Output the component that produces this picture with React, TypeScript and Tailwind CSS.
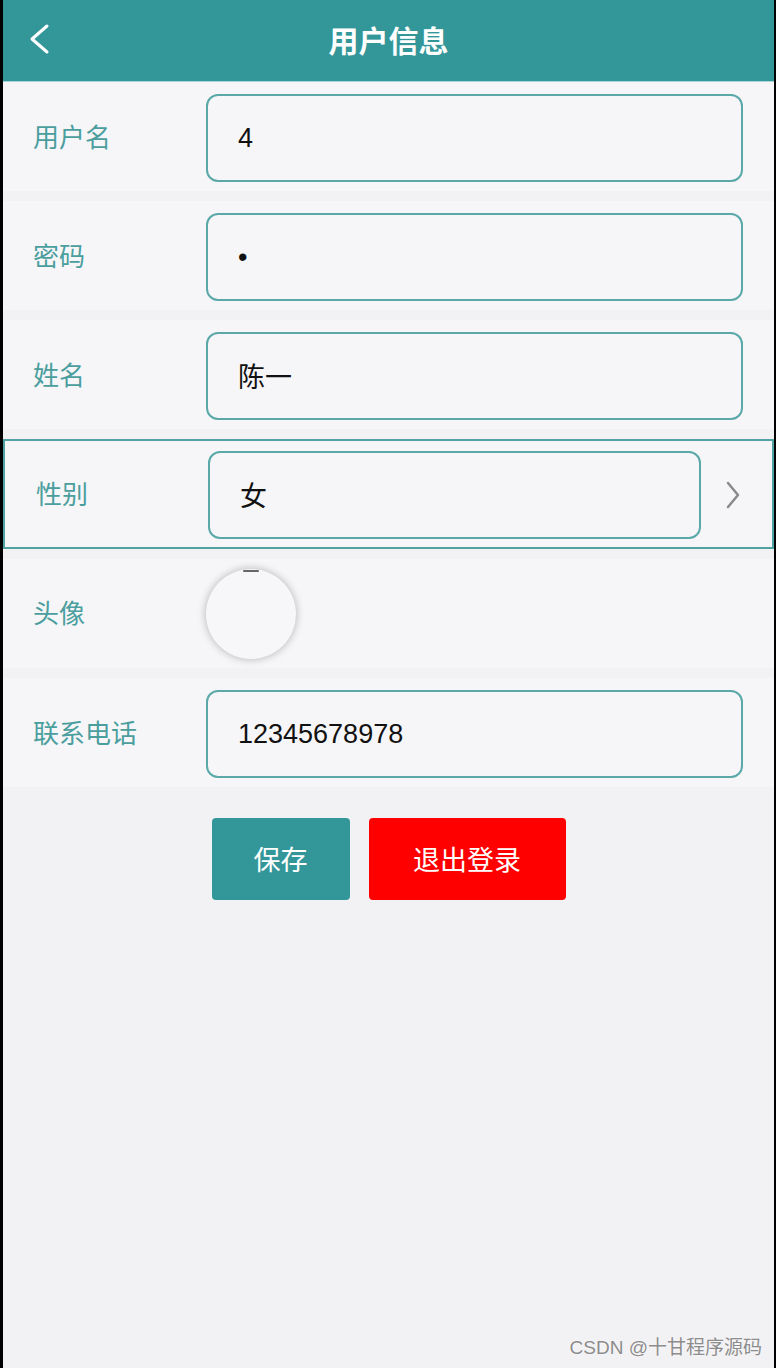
import React from "react";

const cjk = { fontFamily: '"Noto Sans CJK SC", "Noto Sans", sans-serif' };
const latin = { fontFamily: '"Liberation Sans", "Noto Sans CJK SC", sans-serif' };

function Row({ label, children }: { label: string; children: React.ReactNode }) {
  return (
    <div className="flex h-[109px] items-start bg-[#f6f6f8] pt-[12px] pl-[30px] pr-[31px]">
      <div className="flex h-[88px] w-[173px] items-center pb-[5px] text-[26px] text-[#4b9e9e]" style={cjk}>
        {label}
      </div>
      <div className="flex-1">{children}</div>
    </div>
  );
}

function Field({ value, font }: { value: string; font?: React.CSSProperties }) {
  return (
    <div
      className="flex h-[88px] items-center rounded-[12px] border-2 border-[#5aa8a8] bg-[#f6f6f8] pl-[30px] text-[27px] text-[#111]"
      style={font ?? cjk}
    >
      {value}
    </div>
  );
}

export default function App() {
  return (
    <div className="flex min-h-[1368px] bg-black">
      <div className="ml-[3px] mr-[2px] flex flex-1 flex-col bg-[#f2f1f4]">
        {/* Header */}
        <div className="relative flex h-[82px] items-center justify-center border-b border-[#a9d6d6] bg-[#33979a]">
          <svg
            className="absolute left-[25px] top-[23px]"
            width="22"
            height="32"
            viewBox="0 0 22 32"
            fill="none"
            stroke="white"
            strokeWidth="3"
            strokeLinecap="round"
            strokeLinejoin="round"
          >
            <path d="M19 3 L4 16 L19 29" />
          </svg>
          <div className="pb-[3px] text-[30px] font-bold text-white" style={cjk}>
            用户信息
          </div>
        </div>

        <div className="flex flex-col gap-[10px]">
          <Row label="用户名">
            <Field value="4" font={latin} />
          </Row>
          <Row label="密码">
            <Field value="•" font={latin} />
          </Row>
          <Row label="姓名">
            <Field value="陈一" />
          </Row>

          {/* Gender row with active border */}
          <div className="flex h-[110px] items-start border-2 border-[#4fa3a3] bg-[#f6f6f8] pt-[10px] pl-[31px]">
            <div className="flex h-[88px] w-[172px] items-center pb-[5px] text-[26px] text-[#4b9e9e]" style={cjk}>
              性别
            </div>
            <div className="w-[493px]">
              <Field value="女" />
            </div>
            <div className="flex h-[88px] flex-1 items-center pl-[24px]">
              <svg width="16" height="30" viewBox="0 0 16 30" fill="none" stroke="#8a8a8a" strokeWidth="2.5" strokeLinecap="round" strokeLinejoin="round">
                <path d="M3 3 L13 15 L3 27" />
              </svg>
            </div>
          </div>

          <div className="flex h-[109px] items-center bg-[#f6f6f8] pl-[30px]">
            <div className="w-[173px] pb-[5px] text-[26px] text-[#4b9e9e]" style={cjk}>
              头像
            </div>
            <div className="relative h-[90px] w-[90px] rounded-full bg-[#f7f7f9] shadow-[0_0_8px_rgba(0,0,0,0.28)]">
              <div className="absolute left-[37px] top-[1px] h-[2px] w-[16px] rounded-full bg-[#666]" />
            </div>
          </div>

          <Row label="联系电话">
            <Field value="12345678978" font={latin} />
          </Row>
        </div>

        {/* Buttons */}
        <div className="mt-[31px] flex justify-center gap-[19px]">
          <button
            className="flex h-[82px] w-[138px] items-center justify-center rounded-[4px] bg-[#33979a] text-[27px] text-white"
            style={cjk}
          >
            保存
          </button>
          <button
            className="flex h-[82px] w-[197px] items-center justify-center rounded-[4px] bg-[#ff0000] text-[27px] text-white"
            style={cjk}
          >
            退出登录
          </button>
        </div>

        <div className="flex-1" />
        <div className="flex justify-end pb-[6px] pr-[12px]">
          <span className="text-[19px] text-[#8c8c8c] [text-shadow:0_0_2px_#fff]" style={latin}>
            CSDN @十甘程序源码
          </span>
        </div>
      </div>
    </div>
  );
}
